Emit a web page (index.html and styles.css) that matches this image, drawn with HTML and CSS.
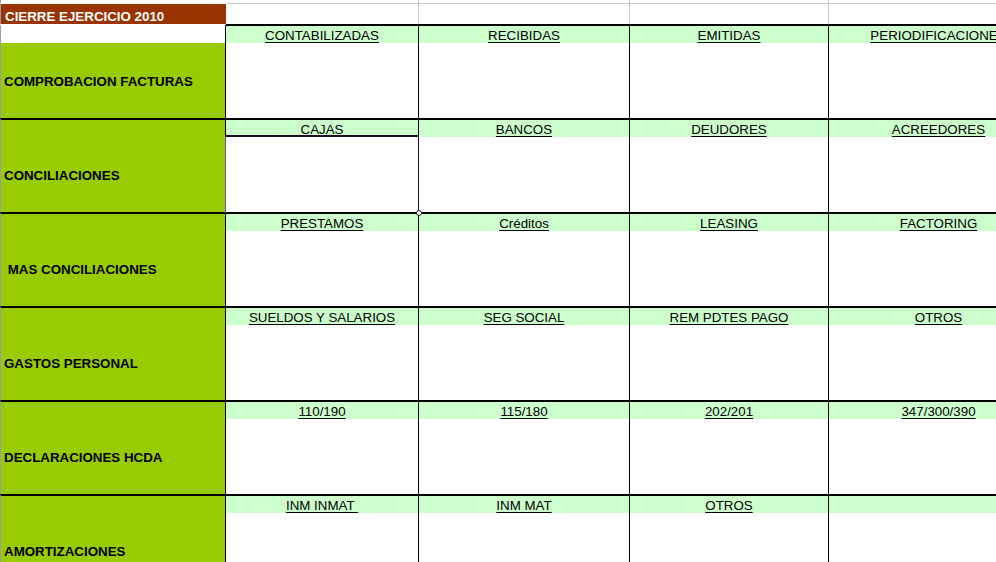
FILE: index.html
```html
<!DOCTYPE html>
<html lang="es">
<head>
<meta charset="utf-8">
<title>Cierre ejercicio 2010</title>
<link rel="stylesheet" href="styles.css">
</head>
<body>
<div class="sheet">
  <div class="row row-top">
    <div class="cell col-a"></div><div class="cell"></div><div class="cell"></div><div class="cell"></div><div class="cell"></div>
  </div>
  <div class="row row-title">
    <div class="cell col-a title">CIERRE EJERCICIO 2010</div><div class="cell"></div><div class="cell"></div><div class="cell"></div><div class="cell"></div>
  </div>

  <div class="group first">
    <div class="row hdr">
      <div class="cell col-a blank"></div>
      <div class="cell"><u>CONTABILIZADAS</u></div>
      <div class="cell"><u>RECIBIDAS</u></div>
      <div class="cell"><u>EMITIDAS</u></div>
      <div class="cell"><u>PERIODIFICACIONES</u></div>
    </div>
    <div class="row body">
      <div class="cell col-a label">COMPROBACION FACTURAS</div>
      <div class="cell"></div><div class="cell"></div><div class="cell"></div><div class="cell"></div>
    </div>
  </div>

  <div class="group">
    <div class="row hdr">
      <div class="cell col-a"></div>
      <div class="cell"><u>CAJAS</u></div>
      <div class="cell"><u>BANCOS</u></div>
      <div class="cell"><u>DEUDORES</u></div>
      <div class="cell"><u>ACREEDORES</u></div>
    </div>
    <div class="row body">
      <div class="cell col-a label">CONCILIACIONES</div>
      <div class="cell selected"><span class="selection"><span class="handle"></span></span></div><div class="cell"></div><div class="cell"></div><div class="cell"></div>
    </div>
  </div>

  <div class="group">
    <div class="row hdr">
      <div class="cell col-a"></div>
      <div class="cell"><u>PRESTAMOS</u></div>
      <div class="cell"><u>Créditos</u></div>
      <div class="cell"><u>LEASING</u></div>
      <div class="cell"><u>FACTORING</u></div>
    </div>
    <div class="row body">
      <div class="cell col-a label"> MAS CONCILIACIONES</div>
      <div class="cell"></div><div class="cell"></div><div class="cell"></div><div class="cell"></div>
    </div>
  </div>

  <div class="group">
    <div class="row hdr">
      <div class="cell col-a"></div>
      <div class="cell"><u>SUELDOS Y SALARIOS</u></div>
      <div class="cell"><u>SEG SOCIAL</u></div>
      <div class="cell"><u>REM PDTES PAGO</u></div>
      <div class="cell"><u>OTROS</u></div>
    </div>
    <div class="row body">
      <div class="cell col-a label">GASTOS PERSONAL</div>
      <div class="cell"></div><div class="cell"></div><div class="cell"></div><div class="cell"></div>
    </div>
  </div>

  <div class="group">
    <div class="row hdr">
      <div class="cell col-a"></div>
      <div class="cell"><u>110/190</u></div>
      <div class="cell"><u>115/180</u></div>
      <div class="cell"><u>202/201</u></div>
      <div class="cell"><u>347/300/390</u></div>
    </div>
    <div class="row body">
      <div class="cell col-a label">DECLARACIONES HCDA</div>
      <div class="cell"></div><div class="cell"></div><div class="cell"></div><div class="cell"></div>
    </div>
  </div>

  <div class="group">
    <div class="row hdr">
      <div class="cell col-a"></div>
      <div class="cell"><u>INM INMAT </u></div>
      <div class="cell"><u>INM MAT</u></div>
      <div class="cell"><u>OTROS</u></div>
      <div class="cell"></div>
    </div>
    <div class="row body">
      <div class="cell col-a label">AMORTIZACIONES</div>
      <div class="cell"></div><div class="cell"></div><div class="cell"></div><div class="cell"></div>
    </div>
  </div>
</div>
</body>
</html>
```
FILE: styles.css
```css
html, body {
  margin: 0;
  padding: 0;
  width: 996px;
  height: 562px;
  overflow: hidden;
  background: #ffffff;
}

.sheet {
  font-family: "Liberation Sans", Arial, sans-serif;
  font-size: 13.33px;
  color: #000000;
  width: 996px;
}

.row {
  display: grid;
  grid-template-columns: 226px 193px 211px 199px 220px;
}

.cell {
  box-sizing: border-box;
  border-right: 1px solid #000000;
  white-space: pre;
  overflow: visible;
}

.col-a {
  border-left: 1px solid #9a9ab4;
}

/* top partial row and title row use light gridlines */
.row-top .cell {
  height: 4px;
  border-right-color: #c8c8c8;
  border-bottom: 1px solid #c8c8c8;
}
.row-top .col-a {
  border-bottom-color: #ffffff;
  border-right-color: #ffffff;
}

.row-title .cell {
  height: 20px;
  border-right-color: #c8c8c8;
}

.title {
  background: #993300;
  color: #ffffff;
  font-weight: bold;
  padding: 5px 0 0 4px;
  line-height: 15px;
  border-right-color: #993300 !important;
}

/* groups */
.hdr .cell {
  height: 19px;
  border-top: 2px solid #000000;
  background: #ccffcc;
  text-align: center;
  padding-top: 1px;
  line-height: 17px;
  color: #000000;
}
.hdr u {
  text-underline-offset: 2px;
}

.hdr .col-a {
  background: #99cc00;
}

.first .hdr .blank {
  background: #ffffff;
  border-top-color: #ffffff;
}

.body .cell {
  height: 75px;
  background: #ffffff;
}

.body .label {
  background: #99cc00;
  font-weight: bold;
  display: flex;
  align-items: center;
  padding-left: 3px;
  padding-top: 1px;
}

/* active cell selection */
.selected {
  position: relative;
}
.selection {
  position: absolute;
  top: -2px;
  left: -1px;
  right: -1px;
  bottom: -1px;
  border-top: 2px solid #1c0a22;
  border-left: 1px solid #5a5a9a;
  border-right: 1px solid #1c0a22;
}
.handle {
  position: absolute;
  right: -4px;
  bottom: -3px;
  width: 4px;
  height: 4px;
  border: 1px solid #222222;
  border-radius: 50%;
  background: #ffffff;
}
```
